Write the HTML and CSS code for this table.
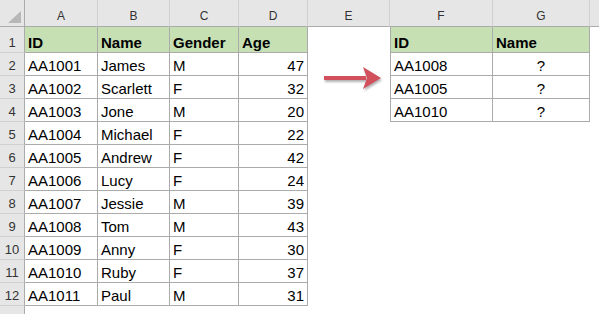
FILE: index.html
```html
<!DOCTYPE html>
<html lang="en">
<head>
  <meta charset="UTF-8" />
  <title>Sheet</title>
  <link rel="stylesheet" href="styles.css">
</head>
<body>

  <div class="sheet">
    <div class="grid">
      <!-- column headers -->
      <div class="corner"><span class="tri"></span></div>
      <div class="colhead">A</div>
      <div class="colhead">B</div>
      <div class="colhead">C</div>
      <div class="colhead">D</div>
      <div class="colhead">E</div>
      <div class="colhead">F</div>
      <div class="colhead">G</div>
      <div class="colhead last"></div>

      <!-- row 1 -->
      <div class="rowhead">1</div>
      <div class="cell hd">ID</div>
      <div class="cell hd">Name</div>
      <div class="cell hd">Gender</div>
      <div class="cell hd">Age</div>
      <div class="empty"></div>
      <div class="cell hd side">ID</div>
      <div class="cell hd">Name</div>
      <div class="empty"></div>

      <div class="rowhead">2</div>
      <div class="cell">AA1001</div>
      <div class="cell">James</div>
      <div class="cell">M</div>
      <div class="cell num">47</div>
      <div class="empty"></div>
      <div class="cell side">AA1008</div>
      <div class="cell ctr">?</div>
      <div class="empty"></div>

      <div class="rowhead">3</div>
      <div class="cell">AA1002</div>
      <div class="cell">Scarlett</div>
      <div class="cell">F</div>
      <div class="cell num">32</div>
      <div class="empty"></div>
      <div class="cell side">AA1005</div>
      <div class="cell ctr">?</div>
      <div class="empty"></div>

      <div class="rowhead">4</div>
      <div class="cell">AA1003</div>
      <div class="cell">Jone</div>
      <div class="cell">M</div>
      <div class="cell num">20</div>
      <div class="empty"></div>
      <div class="cell side">AA1010</div>
      <div class="cell ctr">?</div>
      <div class="empty"></div>

      <div class="rowhead">5</div>
      <div class="cell">AA1004</div>
      <div class="cell">Michael</div>
      <div class="cell">F</div>
      <div class="cell num">22</div>
      <div class="empty wide"></div>

      <div class="rowhead">6</div>
      <div class="cell">AA1005</div>
      <div class="cell">Andrew</div>
      <div class="cell">F</div>
      <div class="cell num">42</div>
      <div class="empty wide"></div>

      <div class="rowhead">7</div>
      <div class="cell">AA1006</div>
      <div class="cell">Lucy</div>
      <div class="cell">F</div>
      <div class="cell num">24</div>
      <div class="empty wide"></div>

      <div class="rowhead">8</div>
      <div class="cell">AA1007</div>
      <div class="cell">Jessie</div>
      <div class="cell">M</div>
      <div class="cell num">39</div>
      <div class="empty wide"></div>

      <div class="rowhead">9</div>
      <div class="cell">AA1008</div>
      <div class="cell">Tom</div>
      <div class="cell">M</div>
      <div class="cell num">43</div>
      <div class="empty wide"></div>

      <div class="rowhead">10</div>
      <div class="cell">AA1009</div>
      <div class="cell">Anny</div>
      <div class="cell">F</div>
      <div class="cell num">30</div>
      <div class="empty wide"></div>

      <div class="rowhead">11</div>
      <div class="cell">AA1010</div>
      <div class="cell">Ruby</div>
      <div class="cell">F</div>
      <div class="cell num">37</div>
      <div class="empty wide"></div>

      <div class="rowhead">12</div>
      <div class="cell">AA1011</div>
      <div class="cell">Paul</div>
      <div class="cell">M</div>
      <div class="cell num">31</div>
      <div class="empty wide"></div>

      <div class="rowhead">13</div>
      <div class="empty full"></div>
    </div>

    <!-- arrow sits over column E -->
    <svg class="arrow" width="64" height="32" viewBox="0 0 64 32">
      <rect x="2" y="12" width="42" height="4" fill="#d24f5c"/>
      <polygon points="41,3 59,14 41,25 45,14" fill="#d24f5c"/>
    </svg>
  </div>

</body>
</html>
```

FILE: styles.css
```css
* {
  box-sizing: border-box;
  margin: 0;
  padding: 0;
}

body {
  font-family: 'Liberation Sans', Arial, sans-serif;
  background: #fff;
  color: #000;
  overflow: hidden;
}

.sheet {
  position: relative;
  width: 599px;
  height: 314px;
  overflow: hidden;
}

.grid {
  display: grid;
  grid-template-columns: 25px 73px 72px 69px 69px 82px 103px 97px 1fr;
  grid-template-rows: 27px 26px repeat(12, 23px);
}

/* headers */
.corner {
  position: relative;
  background: #e6e6e6;
  border-right: 1px solid #ababab;
  border-bottom: 1px solid #ababab;
}

.tri {
  position: absolute;
  right: 3px;
  bottom: 3px;
  width: 0;
  height: 0;
  border-left: 13px solid transparent;
  border-bottom: 12px solid #b7b7b7;
}

.colhead {
  display: flex;
  justify-content: center;
  align-items: flex-end;
  padding-bottom: 3px;
  background: #e6e6e6;
  border-right: 1px solid #d0d0d0;
  border-bottom: 1px solid #ababab;
  font-size: 12px;
  line-height: 14px;
  color: #333;
}

.colhead.last {
  border-right: none;
}

.rowhead {
  display: flex;
  justify-content: center;
  align-items: flex-end;
  padding-bottom: 1px;
  background: #e6e6e6;
  border-right: 1px solid #ababab;
  border-bottom: 1px solid #d0d0d0;
  font-size: 13px;
  line-height: 17px;
  color: #333;
}

/* cells */
.cell {
  display: flex;
  align-items: flex-end;
  padding: 0 3px 1px;
  border-right: 1px solid #ababab;
  border-bottom: 1px solid #ababab;
  font-size: 15px;
  line-height: 17px;
  white-space: nowrap;
}

.cell.hd {
  background: #c6e0b4;
  font-weight: bold;
}

.cell.side {
  border-left: 1px solid #ababab;
}

.num {
  justify-content: flex-end;
}

.ctr {
  justify-content: center;
}

.empty.wide {
  grid-column: span 4;
}

.empty.full {
  grid-column: span 8;
}

.arrow {
  position: absolute;
  left: 322px;
  top: 64px;
  filter: drop-shadow(1px 2px 1px rgba(0, 0, 0, 0.3));
}
```
